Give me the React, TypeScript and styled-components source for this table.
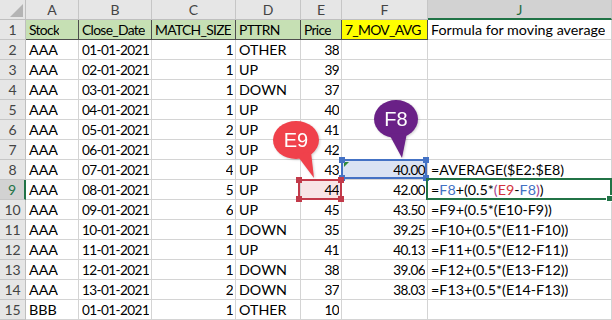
import styled, { createGlobalStyle } from 'styled-components';

const GlobalStyle = createGlobalStyle`
  html, body { margin: 0; padding: 0; background: #fff; }
  body { font-family: Lato, "Liberation Sans", sans-serif; }
`;

const Sheet = styled.div`
  position: relative;
  width: 612px;
  height: 320px;
  overflow: hidden;
  display: grid;
  grid-template-columns: 26px 53px 73px 84px 65px 41px 86px 1fr;
  grid-auto-rows: 20px;
  font-size: 14.3px;
  color: #000;
`;

const Corner = styled.div`
  position: relative;
  background: #e6e6e6;
  border-right: 1px solid #bfbfbf;
  border-bottom: 1px solid #bfbfbf;
  &::after {
    content: '';
    position: absolute;
    right: 2px;
    bottom: 2px;
    border-style: solid;
    border-width: 0 0 13px 13px;
    border-color: transparent transparent #b4b4b4 transparent;
  }
`;

const ColHead = styled.div<{ $active?: boolean }>`
  display: flex;
  align-items: center;
  justify-content: center;
  font-size: 14px;
  background: ${p => (p.$active ? '#d2d2d2' : '#e6e6e6')};
  color: ${p => (p.$active ? '#1e6b3f' : '#444')};
  border-right: 1px solid #c6c6c6;
  border-bottom: ${p => (p.$active ? '2px solid #217346' : '1px solid #bfbfbf')};
`;

const RowHead = styled.div<{ $active?: boolean }>`
  display: flex;
  align-items: center;
  justify-content: center;
  font-size: 14px;
  background: ${p => (p.$active ? '#d2d2d2' : '#e6e6e6')};
  color: ${p => (p.$active ? '#217346' : '#444')};
  border-right: ${p => (p.$active ? '2px solid #217346' : '1px solid #bfbfbf')};
  border-bottom: 1px solid #c6c6c6;
`;

const Cell = styled.div<{ $right?: boolean; $bg?: string; $boxed?: boolean; $flag?: boolean }>`
  position: relative;
  display: flex;
  align-items: flex-end;
  justify-content: ${p => (p.$right ? 'flex-end' : 'flex-start')};
  padding: 0 ${p => (p.$right ? 2 : 3)}px 0 3px;
  line-height: 18px;
  white-space: nowrap;
  min-width: 0;
  background: ${p => p.$bg ?? '#fff'};
  border-right: 1px solid ${p => (p.$boxed ? '#4d4d4d' : '#d4d4d4')};
  border-bottom: 1px solid ${p => (p.$boxed ? '#4d4d4d' : '#d4d4d4')};
  ${p =>
    p.$flag &&
    `&::after {
      content: '';
      position: absolute;
      left: 2px;
      top: 2px;
      border-style: solid;
      border-width: 5px 5px 0 0;
      border-color: #2f8a3c transparent transparent transparent;
    }`}
`;

const Text = styled.span<{ $kind?: 'title' | 'num' }>`
  overflow: hidden;
  flex-shrink: 0;
  max-width: 100%;
  ${p => p.$kind === 'title' && 'font-size: 13.9px; letter-spacing: -0.7px;'}
  ${p =>
    p.$kind === 'num' &&
    'font-size: 13.6px; letter-spacing: -0.6px; font-variant-numeric: tabular-nums;'}
`;

const Frame = styled.span<{ $color: string; $inset: string }>`
  position: absolute;
  inset: ${p => p.$inset};
  border: 2px solid ${p => p.$color};
  pointer-events: none;
  z-index: 2;
`;

const Handle = styled.span<{ $color: string; $pos: string }>`
  position: absolute;
  width: 6px;
  height: 6px;
  background: ${p => p.$color};
  ${p => p.$pos}
`;

const ActiveHandle = styled.span`
  position: absolute;
  right: -3px;
  bottom: -4px;
  width: 5px;
  height: 5px;
  background: #217346;
  border: 1px solid #fff;
`;

const Blue = styled.span`color: #4472c4;`;
const Red = styled.span`color: #d2323d;`;
const Paren = styled.span`color: #a43d8c;`;

const Overlay = styled.svg`
  position: absolute;
  left: 0;
  top: 0;
  pointer-events: none;
  z-index: 5;
  filter: drop-shadow(1px 1px 1px rgba(0, 0, 0, 0.18));
`;

const BubbleText = styled.text`
  font-family: "Liberation Sans", Arial, sans-serif;
  font-size: 20px;
  fill: #fff;
`;

function RefBox({ color, inset }: { color: string; inset: string }) {
  return (
    <Frame $color={color} $inset={inset}>
      <Handle $color={color} $pos="left:-4px;top:-4px;" />
      <Handle $color={color} $pos="right:-4px;top:-4px;" />
      <Handle $color={color} $pos="left:-4px;bottom:-4px;" />
      <Handle $color={color} $pos="right:-4px;bottom:-4px;" />
    </Frame>
  );
}

const cols = ['A', 'B', 'C', 'D', 'E', 'F', 'J'];

const data: string[][] = [
  ['AAA', '01-01-2021', '1', 'OTHER', '38', '', ''],
  ['AAA', '02-01-2021', '1', 'UP', '39', '', ''],
  ['AAA', '03-01-2021', '1', 'DOWN', '37', '', ''],
  ['AAA', '04-01-2021', '1', 'UP', '40', '', ''],
  ['AAA', '05-01-2021', '2', 'UP', '41', '', ''],
  ['AAA', '06-01-2021', '3', 'UP', '42', '', ''],
  ['AAA', '07-01-2021', '4', 'UP', '43', '40.00', '=AVERAGE($E2:$E8)'],
  ['AAA', '08-01-2021', '5', 'UP', '44', '42.00', ''],
  ['AAA', '09-01-2021', '6', 'UP', '45', '43.50', '=F9+(0.5*(E10-F9))'],
  ['AAA', '10-01-2021', '1', 'DOWN', '35', '39.25', '=F10+(0.5*(E11-F10))'],
  ['AAA', '11-01-2021', '1', 'UP', '41', '40.13', '=F11+(0.5*(E12-F11))'],
  ['AAA', '12-01-2021', '1', 'DOWN', '38', '39.06', '=F12+(0.5*(E13-F12))'],
  ['AAA', '13-01-2021', '2', 'DOWN', '37', '38.03', '=F13+(0.5*(E14-F13))'],
  ['BBB', '01-01-2021', '1', 'OTHER', '10', '', ''],
];

// numbers and dates sit on the right, text on the left
const rightCols = [false, true, true, false, true, true, false];

const titles = ['Stock', 'Close_Date', 'MATCH_SIZE', 'PTTRN', 'Price', '7_MOV_AVG', 'Formula for moving average'];

export default function App() {
  return (
    <>
      <GlobalStyle />
      <Sheet>
        <Corner />
        {cols.map(c => (
          <ColHead key={c} $active={c === 'J'}>{c}</ColHead>
        ))}

        <RowHead>1</RowHead>
        {titles.map((t, i) => (
          <Cell key={t} $bg={i === 5 ? '#ffff00' : i < 5 ? '#c6e0b4' : '#fff'} $boxed={i < 6}>
            <Text $kind={i < 6 ? 'title' : undefined}>{t}</Text>
          </Cell>
        ))}

        {data.map((row, r) => {
          const n = r + 2;
          return [
            <RowHead key={'h' + n} $active={n === 9}>{n}</RowHead>,
            ...row.map((v, i) => {
              const key = n + '-' + i;
              if (n === 8 && i === 5) {
                return (
                  <Cell key={key} $right $bg="#dae3f3" $flag>
                    <Text $kind="num">{v}</Text>
                    <RefBox color="#4472c4" inset="-1px 0 0 -1px" />
                  </Cell>
                );
              }
              if (n === 9 && i === 4) {
                return (
                  <Cell key={key} $right $bg="#f8e4e6">
                    <Text $kind="num">{v}</Text>
                    <RefBox color="#c23a4a" inset="-1px -1px -1px -3px" />
                  </Cell>
                );
              }
              if (n === 9 && i === 6) {
                return (
                  <Cell key={key}>
                    <Text>
                      =<Blue>F8</Blue>+(0.5*<Paren>(</Paren><Red>E9</Red>-<Blue>F8</Blue><Paren>)</Paren>)
                    </Text>
                    <Frame $color="#217346" $inset="-2px -1px -1px -2px">
                      <ActiveHandle />
                    </Frame>
                  </Cell>
                );
              }
              return (
                <Cell key={key} $right={rightCols[i]}>
                  <Text $kind={rightCols[i] ? 'num' : undefined}>{v}</Text>
                </Cell>
              );
            }),
          ];
        })}

        <Overlay width={612} height={320} viewBox="0 0 612 320">
          <g fill="#f0414b">
            <ellipse cx={296} cy={140} rx={23} ry={19} />
            <polygon points="296,154 311,152 314,178" />
          </g>
          <BubbleText x={296} y={147} textAnchor="middle">E9</BubbleText>
          <g fill="#6a2187">
            <ellipse cx={396} cy={119} rx={22} ry={19} />
            <polygon points="389,134 407,133 402,158" />
          </g>
          <BubbleText x={396} y={126} textAnchor="middle">F8</BubbleText>
        </Overlay>
      </Sheet>
    </>
  );
}
